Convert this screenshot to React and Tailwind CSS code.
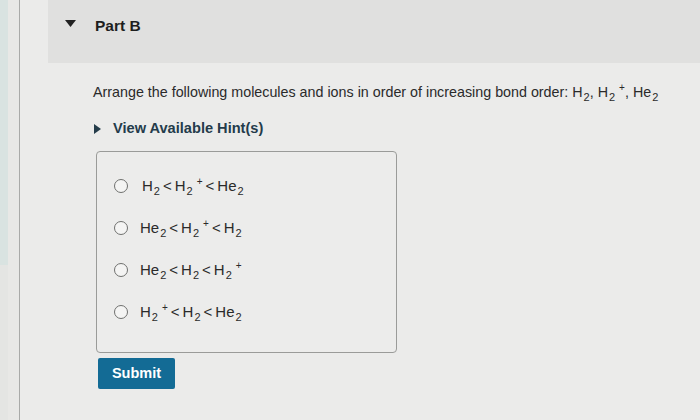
import React from "react";

const Sub = ({ children }) => (
  <span className="relative top-[4px] text-[11px] ml-[1px]">{children}</span>
);
const Sup = ({ children }) => (
  <span className="relative top-[-6px] text-[10px] ml-[4px]">{children}</span>
);

const H2 = () => (<span>H<Sub>2</Sub></span>);
const H2p = () => (<span>H<Sub>2</Sub><Sup>+</Sup></span>);
const He2 = () => (<span>He<Sub>2</Sub></span>);
const Lt = () => <span className="mx-[3px]">&lt;</span>;

const options = [
  [<H2 />, <H2p />, <He2 />],
  [<He2 />, <H2p />, <H2 />],
  [<He2 />, <H2 />, <H2p />],
  [<H2p />, <H2 />, <He2 />],
];

export default function App() {
  return (
    <div className="w-[700px] h-[420px] overflow-hidden bg-[#ebebea] flex text-[#222]" style={{ fontFamily: '"Liberation Sans", Arial, sans-serif' }}>
      <div className="w-[8px] flex flex-col">
        <div className="h-[265px] bg-[#d9e3e1]" />
        <div className="flex-1 bg-[#e4e5e3]" />
      </div>
      <div className="w-[11px] bg-[#e8e8e6]" />
      <div className="w-[1px] bg-[#a9aaa8]" />
      <div className="flex-1 flex flex-col pl-[28px]">
        <div className="h-[63px] bg-[#e0e0df] flex items-start pt-[14px] pl-[17px]">
          <svg width="11" height="8" viewBox="0 0 11 8" className="mt-[6px]"><path d="M0 0 L11 0 L5.5 7 Z" fill="#222" /></svg>
          <span className="ml-[19px] text-[15.5px] font-bold text-[#1e1e1e]">Part B</span>
        </div>
        <div className="pl-[45px] pt-[19px] text-[14.3px] text-[#2a2a2a]">
          Arrange the following molecules and ions in order of increasing bond order: <H2 />, <H2p />, <He2 />
        </div>
        <div className="pl-[46px] pt-[15px] flex items-center">
          <svg width="7" height="10" viewBox="0 0 7 10"><path d="M0 0 L7 5 L0 10 Z" fill="#243c4a" /></svg>
          <span className="ml-[12px] text-[14.6px] font-bold text-[#243b4b]">View Available Hint(s)</span>
        </div>
        <div className="ml-[48px] mt-[11px] w-[301px] h-[202px] border border-[#9a9b99] rounded-[4px] bg-[#ececeb] flex flex-col pl-[17px] pt-[24px] gap-[22px]">
          {options.map((o, i) => (
            <div key={i} className="flex items-center h-[20px] text-[15px] text-[#2a2a2a]">
              <div className="w-[14px] h-[14px] rounded-full border border-[#6f706e] bg-[#f4f4f3]" />
              <span className={i === 0 ? "ml-[14px]" : "ml-[12px]"}>
                {o[0]}<Lt />{o[1]}<Lt />{o[2]}
              </span>
            </div>
          ))}
        </div>
        <div className="ml-[50px] mt-[5px]">
          <button className="w-[77px] h-[31px] bg-[#136b95] text-white text-[14.5px] font-bold rounded-[2px]">Submit</button>
        </div>
      </div>
    </div>
  );
}
